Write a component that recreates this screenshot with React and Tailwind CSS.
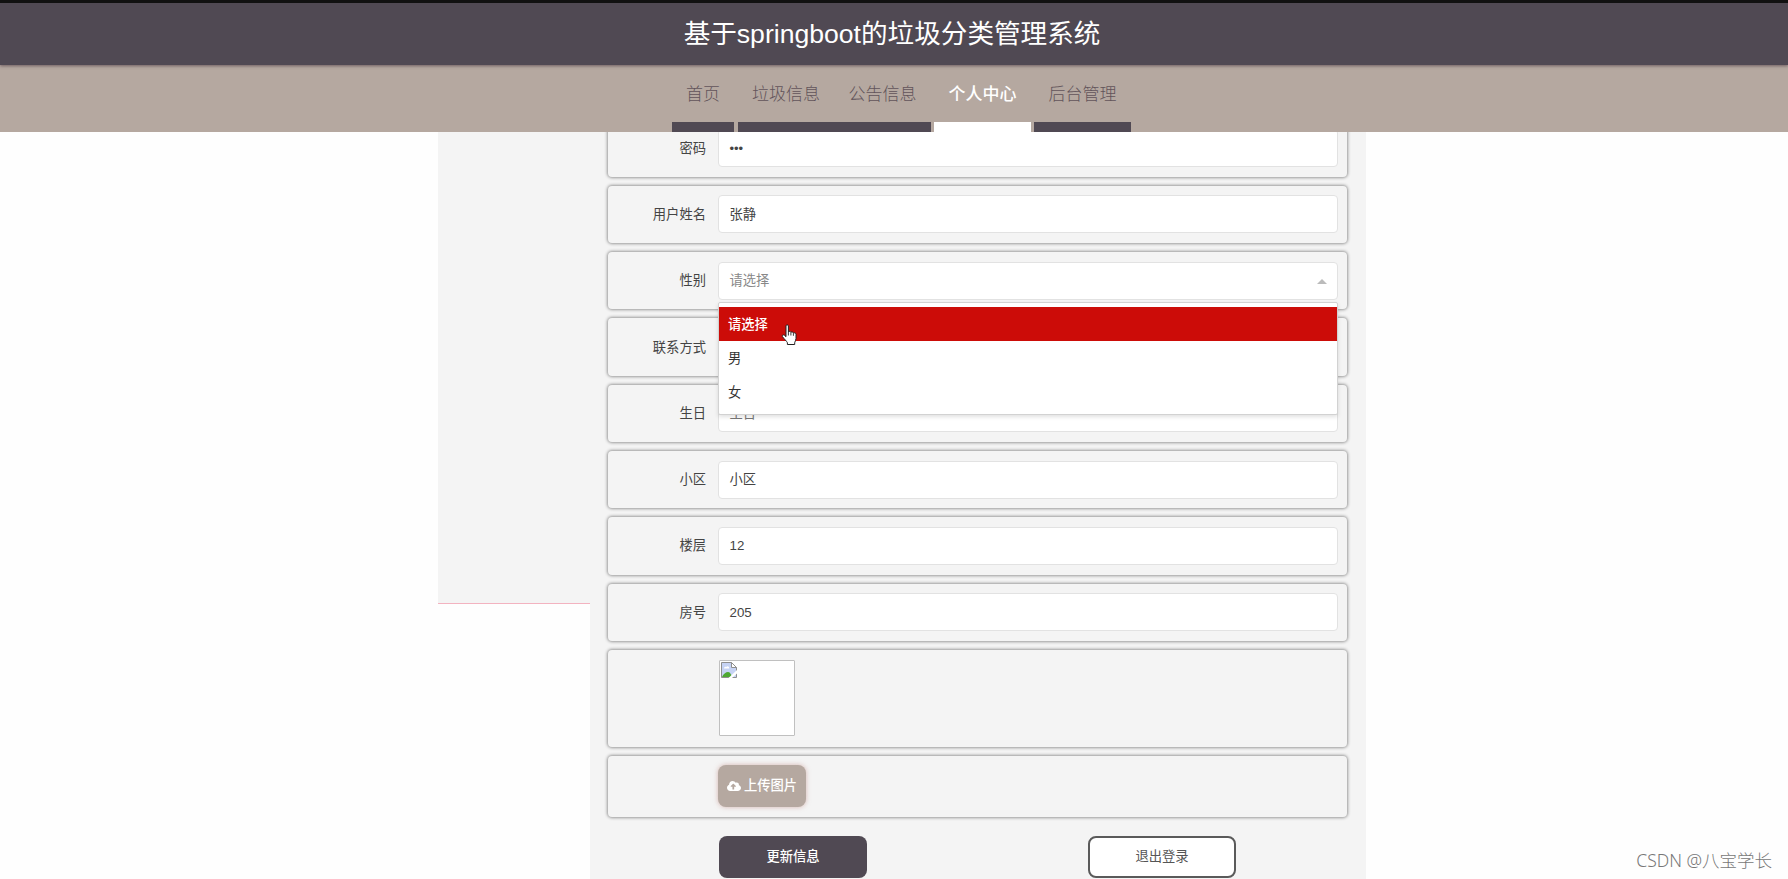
import React from 'react'
import { FaCloudUploadAlt } from 'react-icons/fa'

const FormRow = ({ label, children }) => (
  <div className="h-[57.3px] mb-[9px] flex items-center rounded-[4px] shadow-[0_0_3px_1px_#999] pr-[9px]">
    <label className="w-[98px] shrink-0 pt-px text-right text-[13.3px] text-[#444]">{label}</label>
    <div className="relative ml-3 flex-1">{children}</div>
  </div>
)

const Field = ({ children }) => (
  <div className="h-[38px] flex items-center rounded-[4px] border border-[#e2e2e2] bg-white px-[10.5px] pt-px text-[13.3px] text-[#444]">
    {children}
  </div>
)

const HandCursor = () => (
  <svg className="absolute left-[62px] top-[17px]" width="17" height="22" viewBox="0 0 17 22">
    <path
      d="M5 1.8C5 .6 7.4.6 7.4 1.8V8c.4-1 2.3-.8 2.5.4.6-.8 2.3-.6 2.5.7.8-.7 2.6-.2 2.6 1.2v4.2c0 1.500-1 2.800-1.300 4.200V20.500H6.400v-1.800C5.500 17 3.600 15.400 1.400 12.600.7 11.500 2.200 10.300 3.400 11.200L5 12.700z"
      fill="#fff"
      stroke="#222"
      strokeWidth="1"
      strokeLinejoin="round"
    />
    <path d="M7.400 8v3.500M9.900 8.500v3M12.400 9.200v2.600" stroke="#222" strokeWidth=".9" />
  </svg>
)

const BrokenImage = () => (
  <svg width="16" height="16" viewBox="0 0 16 16">
    <path d="M.5.500h10l5 5v10H.500z" fill="#c6d3f4" stroke="#8f8f8f" />
    <path d="M3 6.500c0-1.500 1.500-2 2.300-1.400C6 3.500 8.300 4 8.300 6.500z" fill="#fff" />
    <path d="M1 15c1-3 4-5 6-5s3 2 4 5z" fill="#4ea832" />
    <path d="M10.500.500v5h5z" fill="#fff" stroke="#8f8f8f" />
    <path d="M7.500 16L16 8v3.500L11 16z" fill="#fff" />
  </svg>
)

const App = () => {
  return (
    <div className="relative h-[879px] w-full overflow-hidden bg-[#fefefe] flex flex-col font-['Liberation_Sans','Noto_Sans_CJK_SC',sans-serif]">
      {/* Header */}
      <header className="relative z-10 h-[65px] shrink-0 border-t-[3px] border-[#111] bg-[#504953] flex items-center justify-center pr-[4px] shadow-[0_1px_3px_rgba(80,60,70,0.7)]">
        <h1 className="text-[26.6px] leading-none text-white whitespace-nowrap">基于springboot的垃圾分类管理系统</h1>
      </header>

      {/* Nav */}
      <nav className="h-[67px] shrink-0 bg-[#b5a8a0] flex pl-[672px] text-[17px] leading-[59px] text-[#62545a] text-center font-light">
        <a className="h-[67px] w-[62px] mr-1 border-b-[10px] border-[#504953]">首页</a>
        <a className="h-[67px] w-[96px] border-b-[10px] border-[#504953]">垃圾信息</a>
        <a className="h-[67px] w-[97px] mr-[3px] border-b-[10px] border-[#504953]">公告信息</a>
        <a className="h-[67px] w-[97px] mr-[3px] border-b-[10px] border-white text-white font-medium">个人中心</a>
        <a className="h-[67px] w-[97px] border-b-[10px] border-[#504953]">后台管理</a>
      </nav>

      <main className="flex-1 min-h-0 flex pl-[438px] overflow-hidden">
        {/* Sidebar */}
        <aside className="w-[152px] h-[472px] shrink-0 bg-[#f4f4f4] border-b border-b-[#f3b3c0]"></aside>

        {/* Profile form */}
        <section className="w-[776px] shrink-0 bg-[#f4f4f4] pl-[18px] pr-[19px]">
          <div className="-mt-[12.5px]">
            <FormRow label="密码">
              <Field><span className="text-[13px]">•••</span></Field>
            </FormRow>
            <FormRow label="用户姓名">
              <Field>张静</Field>
            </FormRow>
            <FormRow label="性别">
              <Field>
                <span className="flex-1 text-[#888]">请选择</span>
                <svg width="10" height="5" viewBox="0 0 10 5"><path d="M0 5l5-5 5 5z" fill="#bbb" /></svg>
              </Field>
              <ul className="absolute z-20 left-0 top-[40px] w-full h-[113px] border border-[#d2d2d2] bg-white py-[4px] rounded-[2px] shadow-[0_2px_4px_rgba(0,0,0,0.12)] text-[13.3px] leading-[35px] text-[#333]">
                <li className="relative h-[34px] bg-[#cc0c08] pl-[9px] text-white font-medium">
                  请选择
                  <HandCursor />
                </li>
                <li className="h-[34px] pl-[9px]">男</li>
                <li className="h-[34px] pl-[9px]">女</li>
              </ul>
            </FormRow>
            <FormRow label="联系方式">
              <Field></Field>
            </FormRow>
            <FormRow label="生日">
              <Field><span className="text-[#777]">生日</span></Field>
            </FormRow>
            <FormRow label="小区">
              <Field>小区</Field>
            </FormRow>
            <FormRow label="楼层">
              <Field>12</Field>
            </FormRow>
            <FormRow label="房号">
              <Field>205</Field>
            </FormRow>

            <div className="h-[97px] mb-[9px] flex items-center pl-[111px] rounded-[4px] shadow-[0_0_3px_1px_#999]">
              <div className="size-[76px] border border-[#c0c0c0] bg-white p-px rounded-[1px]">
                <BrokenImage />
              </div>
            </div>

            <div className="h-[61px] flex items-center pl-[110px] rounded-[4px] shadow-[0_0_3px_1px_#999]">
              <button className="w-[88px] h-[42px] flex items-center justify-center gap-[3px] rounded-[8px] bg-[#b5a8a0] text-[13.3px] text-white font-medium shadow-[0_0_5px_rgba(190,130,120,0.55)]">
                <FaCloudUploadAlt className="size-[14px]" />
                上传图片
              </button>
            </div>

            <div className="mt-[19px] flex pl-[111px] text-[13.3px]">
              <button className="w-[148px] h-[42px] rounded-[8px] bg-[#504953] text-white font-medium">更新信息</button>
              <button className="ml-[221px] w-[148px] h-[42px] rounded-[8px] border-2 border-[#5a5a5a] bg-white text-[#555]">退出登录</button>
            </div>
          </div>
        </section>
      </main>

      <span className="absolute right-[16px] bottom-[7px] text-[17.5px] leading-6 font-light text-[#777] font-['Noto_Sans','Noto_Sans_CJK_SC',sans-serif]">
        CSDN @八宝学长
      </span>
    </div>
  )
}

export default App
